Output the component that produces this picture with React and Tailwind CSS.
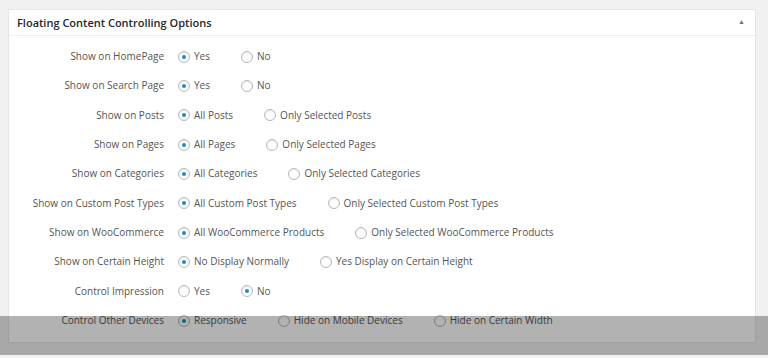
import React from 'react';

// Rows of the options table
const rows = [
  { label: 'Show on HomePage', options: ['Yes', 'No'], checked: 0 },
  { label: 'Show on Search Page', options: ['Yes', 'No'], checked: 0 },
  { label: 'Show on Posts', options: ['All Posts', 'Only Selected Posts'], checked: 0 },
  { label: 'Show on Pages', options: ['All Pages', 'Only Selected Pages'], checked: 0 },
  { label: 'Show on Categories', options: ['All Categories', 'Only Selected Categories'], checked: 0 },
  { label: 'Show on Custom Post Types', options: ['All Custom Post Types', 'Only Selected Custom Post Types'], checked: 0 },
  { label: 'Show on WooCommerce', options: ['All WooCommerce Products', 'Only Selected WooCommerce Products'], checked: 0 },
  { label: 'Show on Certain Height', options: ['No Display Normally', 'Yes Display on Certain Height'], checked: 0 },
  { label: 'Control Impression', options: ['Yes', 'No'], checked: 1 },
  { label: 'Control Other Devices', options: ['Responsive', 'Hide on Mobile Devices', 'Hide on Certain Width'], checked: 0 },
];

function Radio({ checked }) {
  return (
    <span className="flex items-center justify-center w-[12px] h-[12px] rounded-full border border-[#b4b9be] bg-white shadow-[inset_0_1px_2px_rgba(0,0,0,0.1)]">
      {checked && <span className="w-[4px] h-[4px] rounded-full bg-[#1e8cbe]"></span>}
    </span>
  );
}

export default function App() {
  return (
    <div className="relative w-[768px] h-[358px] bg-[#f1f1f1] overflow-hidden" style={{ fontFamily: '"Open Sans", sans-serif' }}>
      <div className="pt-[9px] pl-[8px] pr-[12px]">
        <div className="bg-white border border-[#e5e5e5] h-[334px]">
          {/* Header */}
          <div className="flex items-center justify-between h-[26px] pl-[8px] pr-[9px] border-b border-[#eeeeee]">
            <h3 className="text-[11px] font-semibold text-[#23282d] pt-[1px]">Floating Content Controlling Options</h3>
            <span className="text-[7px] text-[#72777c] mr-[1px]">▲</span>
          </div>

          {/* Options */}
          <div className="pt-[6px]">
            {rows.map((row) => (
              <div key={row.label} className="flex items-center h-[29.33px] text-[10px] text-[#555]">
                <div className="w-[155px] text-right">{row.label}</div>
                <div className="flex items-center pl-[14px]">
                  {row.options.map((opt, i) => (
                    <label key={opt} className="flex items-center mr-[31px]">
                      <Radio checked={i === row.checked} />
                      <span className="ml-[4px]">{opt}</span>
                    </label>
                  ))}
                </div>
              </div>
            ))}
          </div>
        </div>
      </div>

      {/* Dark band over the bottom */}
      <div className="absolute left-0 right-0 top-[316px] h-[39px] bg-black/30"></div>
    </div>
  );
}
